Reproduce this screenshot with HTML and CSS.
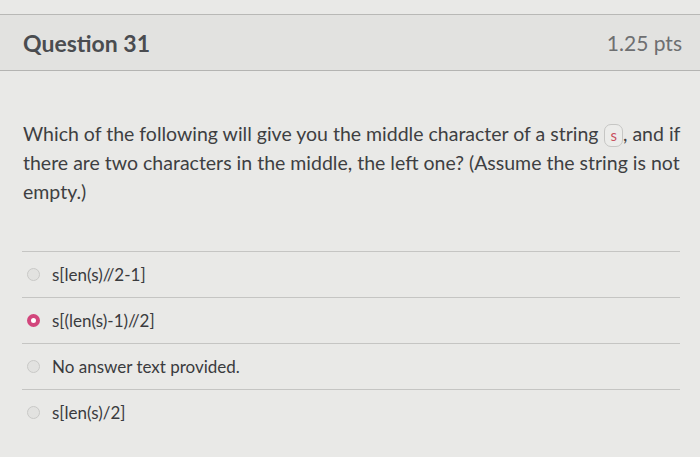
FILE: index.html
```html
<!DOCTYPE html>
<html lang="en">
<head>
<meta charset="utf-8">
<link rel="stylesheet" href="styles.css">
</head>
<body>
<div class="page">
  <div class="header">
    <span class="title">Question 31</span>
    <span class="pts">1.25 pts</span>
  </div>
  <div class="content">
    <p class="question">Which of the following will give you the middle character of a string <code class="code">s</code>, and if there are two characters in the middle, the left one? (Assume the string is not empty.)</p>
    <ul class="answers">
      <li class="answer"><span class="radio"></span><span class="label">s[len(s)//2-1]</span></li>
      <li class="answer"><span class="radio selected"></span><span class="label">s[(len(s)-1)//2]</span></li>
      <li class="answer"><span class="radio"></span><span class="label">No answer text provided.</span></li>
      <li class="answer"><span class="radio"></span><span class="label">s[len(s)/2]</span></li>
    </ul>
  </div>
</div>
</body>
</html>
```

FILE: styles.css
```css
html, body {
  margin: 0;
  padding: 0;
}
body {
  background: #e9e9e7;
  font-family: Lato, "Open Sans", sans-serif;
  width: 700px;
  height: 457px;
  overflow: hidden;
}
.page {
  padding-top: 14px;
}
.header {
  display: flex;
  justify-content: space-between;
  align-items: center;
  height: 55px;
  padding: 0 18px 0 23px;
  background: #e2e2e0;
  border-top: 1px solid #b8b8b6;
  border-bottom: 1px solid #b4b4b2;
}
.title {
  font-size: 23px;
  font-weight: 700;
  color: #4a4c50;
}
.pts {
  font-size: 21px;
  color: #6e6f71;
}
.content {
  padding: 0 20px 0 23px;
}
.question {
  margin: 48px 0 0 0;
  width: 662px;
  font-size: 19.5px;
  line-height: 29px;
  color: #3e3f42;
}
.code {
  display: inline-block;
  font-family: Lato, sans-serif;
  font-size: 15px;
  line-height: 21px;
  padding: 0 5px;
  margin-left: 1px;
  color: #c9505e;
  background: #ececea;
  border: 1px solid #c6c6c4;
  border-radius: 7px;
  vertical-align: 0px;
}
.answers {
  list-style: none;
  margin: 45px 0 0 -1px;
  padding: 0;
}
.answer {
  display: flex;
  align-items: center;
  height: 45px;
  border-top: 1px solid #c5c5c3;
  color: #3a3b3e;
  font-size: 17px;
}
.radio {
  box-sizing: border-box;
  width: 13px;
  height: 13px;
  border-radius: 50%;
  margin-left: 5px;
  margin-right: 12px;
  background: #e2e2e0;
  border: 1px solid #c9c9c7;
}
.radio.selected {
  background: #ffffff;
  border: 4px solid #d2467c;
}
.label {
  margin-top: 0px;
}
```
